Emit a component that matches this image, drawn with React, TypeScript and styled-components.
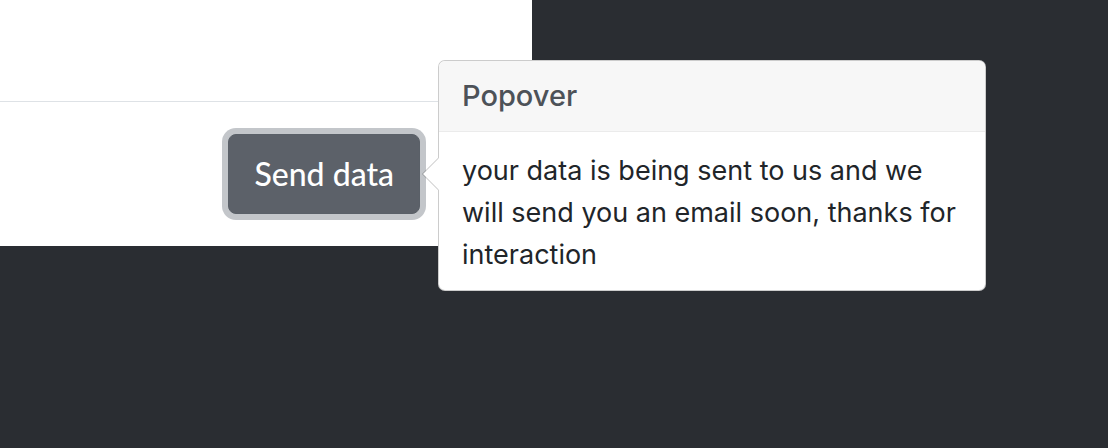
import React from "react"
import styled, { createGlobalStyle } from "styled-components"

const GlobalStyle = createGlobalStyle`
  html, body {
    margin: 0;
    padding: 0;
    background: #2a2d32;
  }
  body {
    font-family: Inter, "Noto Sans", "Liberation Sans", sans-serif;
  }
`

const Page = styled.div`
  position: relative;
  width: 1108px;
  height: 448px;
  overflow: hidden;
  background: #2a2d32;
`

const Card = styled.div`
  width: 532px;
  background: #ffffff;
  display: flex;
  flex-direction: column;
`

const CardTop = styled.div`
  height: 101px;
  border-bottom: 1px solid #dee2e6;
`

const CardFooter = styled.div`
  height: 144px;
  box-sizing: border-box;
  padding: 32px 112px 32px 0;
  display: flex;
  justify-content: flex-end;
  align-items: center;
`

const Button = styled.button`
  font-family: Lato, "Noto Sans", sans-serif;
  font-size: 32px;
  font-weight: 500;
  line-height: 48px;
  padding: 15px 25px;
  border: 1px solid #5a6068;
  border-radius: 8px;
  background: #5c6169;
  color: #ffffff;
  box-shadow: 0 0 0 6px #c3c6ca;
  cursor: pointer;
`

const Popover = styled.div`
  position: absolute;
  left: 438px;
  top: 60px;
  width: 548px;
  box-sizing: border-box;
  background: #ffffff;
  border: 1px solid rgba(0, 0, 0, 0.2);
  border-radius: 7px;
`

const Arrow = styled.div<{ $top: number }>`
  position: absolute;
  left: -17px;
  top: ${p => p.$top}px;
  width: 16px;
  height: 32px;

  &::before,
  &::after {
    content: "";
    position: absolute;
    top: 0;
    border-style: solid;
    border-color: transparent;
    border-width: 16px 16px 16px 0;
  }
  &::before {
    left: 0;
    border-right-color: rgba(0, 0, 0, 0.25);
  }
  &::after {
    left: 1px;
    border-right-color: #ffffff;
  }
`

const PopoverHeader = styled.h3`
  margin: 0;
  padding: 16px 23px;
  font-size: 29px;
  font-weight: 500;
  line-height: 38px;
  color: #4d5258;
  background: #f7f7f7;
  border-bottom: 1px solid #ebebeb;
  border-radius: 6px 6px 0 0;
`

const PopoverBody = styled.div`
  padding: 18px 23px 14px;
  font-size: 27px;
  line-height: 42px;
  color: #212529;
  white-space: nowrap;
`

export default function App() {
  return (
    <>
      <GlobalStyle />
      <Page>
        <Card>
          <CardTop />
          <CardFooter>
            <Button>Send data</Button>
          </CardFooter>
        </Card>
        <Popover>
          <Arrow $top={97} />
          <PopoverHeader>Popover</PopoverHeader>
          <PopoverBody>
            your data is being sent to us and we
            <br />
            will send you an email soon, thanks for
            <br />
            interaction
          </PopoverBody>
        </Popover>
      </Page>
    </>
  )
}
